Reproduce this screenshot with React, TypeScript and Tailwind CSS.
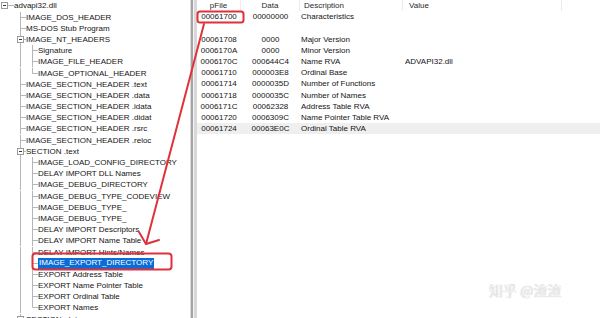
import React from "react";

type TreeNode = {
  depth: number;
  label: string;
  last?: boolean;
  toggle?: "-" | "+";
  selected?: boolean;
};

const treeNodes: TreeNode[] = [
  { depth: 0, label: "advapi32.dll", toggle: "-" },
  { depth: 1, label: "IMAGE_DOS_HEADER" },
  { depth: 1, label: "MS-DOS Stub Program" },
  { depth: 1, label: "IMAGE_NT_HEADERS", toggle: "-" },
  { depth: 2, label: "Signature" },
  { depth: 2, label: "IMAGE_FILE_HEADER" },
  { depth: 2, label: "IMAGE_OPTIONAL_HEADER", last: true },
  { depth: 1, label: "IMAGE_SECTION_HEADER .text" },
  { depth: 1, label: "IMAGE_SECTION_HEADER .data" },
  { depth: 1, label: "IMAGE_SECTION_HEADER .idata" },
  { depth: 1, label: "IMAGE_SECTION_HEADER .didat" },
  { depth: 1, label: "IMAGE_SECTION_HEADER .rsrc" },
  { depth: 1, label: "IMAGE_SECTION_HEADER .reloc" },
  { depth: 1, label: "SECTION .text", toggle: "-" },
  { depth: 2, label: "IMAGE_LOAD_CONFIG_DIRECTORY" },
  { depth: 2, label: "DELAY IMPORT DLL Names" },
  { depth: 2, label: "IMAGE_DEBUG_DIRECTORY" },
  { depth: 2, label: "IMAGE_DEBUG_TYPE_CODEVIEW" },
  { depth: 2, label: "IMAGE_DEBUG_TYPE_" },
  { depth: 2, label: "IMAGE_DEBUG_TYPE_" },
  { depth: 2, label: "DELAY IMPORT Descriptors" },
  { depth: 2, label: "DELAY IMPORT Name Table" },
  { depth: 2, label: "DELAY IMPORT Hints/Names" },
  { depth: 2, label: "IMAGE_EXPORT_DIRECTORY", selected: true },
  { depth: 2, label: "EXPORT Address Table" },
  { depth: 2, label: "EXPORT Name Pointer Table" },
  { depth: 2, label: "EXPORT Ordinal Table" },
  { depth: 2, label: "EXPORT Names", last: true },
  { depth: 1, label: "SECTION .data", toggle: "+" },
];

const rows = [
  { pFile: "00061700", data: "00000000", desc: "Characteristics", value: "" },
  { pFile: "", data: "", desc: "", value: "" },
  { pFile: "00061708", data: "0000", desc: "Major Version", value: "" },
  { pFile: "0006170A", data: "0000", desc: "Minor Version", value: "" },
  { pFile: "0006170C", data: "000644C4", desc: "Name RVA", value: "ADVAPI32.dll" },
  { pFile: "00061710", data: "000003E8", desc: "Ordinal Base", value: "" },
  { pFile: "00061714", data: "0000035D", desc: "Number of Functions", value: "" },
  { pFile: "00061718", data: "0000035C", desc: "Number of Names", value: "" },
  { pFile: "0006171C", data: "00062328", desc: "Address Table RVA", value: "" },
  { pFile: "00061720", data: "0006309C", desc: "Name Pointer Table RVA", value: "" },
  { pFile: "00061724", data: "00063E0C", desc: "Ordinal Table RVA", value: "", hot: true },
];

const LINE = "#b6b6b6";

function ToggleBox({ cx, sign }: { cx: number; sign: "-" | "+" }) {
  return (
    <g>
      <rect x={cx - 3} y={2.5} width={6} height={6} fill="#fff" stroke="#9a9a9a" />
      <line x1={cx - 1.5} y1={5.5} x2={cx + 1.5} y2={5.5} stroke="#333" />
      {sign === "+" && <line x1={cx} y1={4} x2={cx} y2={7} stroke="#333" />}
    </g>
  );
}

function RootCell({ toggle }: { toggle?: "-" | "+" }) {
  return (
    <svg width="14" height="11.2" viewBox="0 0 14 11.2" className="shrink-0">
      {toggle && (
        <>
          <line x1="8" y1="5.5" x2="14" y2="5.5" stroke={LINE} />
          <ToggleBox cx={4.5} sign={toggle} />
        </>
      )}
    </svg>
  );
}

function PipeCell() {
  return (
    <svg width="12" height="11.2" viewBox="0 0 12 11.2" className="shrink-0">
      <line x1="6.5" y1="0" x2="6.5" y2="11.2" stroke={LINE} />
    </svg>
  );
}

function ElbowCell({ last, toggle }: { last?: boolean; toggle?: "-" | "+" }) {
  return (
    <svg width="12" height="11.2" viewBox="0 0 12 11.2" className="shrink-0">
      <line x1="6.5" y1="0" x2="6.5" y2={last ? 5.5 : 11.2} stroke={LINE} />
      <line x1="6.5" y1="5.5" x2="12" y2="5.5" stroke={LINE} />
      {toggle && <ToggleBox cx={6.5} sign={toggle} />}
    </svg>
  );
}

function TreeRow({ node }: { node: TreeNode }) {
  const cells: React.ReactNode[] = [];
  if (node.depth === 0) {
    cells.push(<RootCell key="r" toggle={node.toggle} />);
  } else {
    cells.push(<RootCell key="r" />);
    for (let i = 1; i < node.depth; i++) cells.push(<PipeCell key={i} />);
    cells.push(<ElbowCell key="e" last={node.last} toggle={node.toggle} />);
  }
  return (
    <div className="flex h-[11.2px] items-center whitespace-nowrap">
      {cells}
      <span
        className={
          node.selected
            ? "bg-[#0a6cd6] text-white px-[1px] leading-[10.5px]"
            : "leading-[11.2px]"
        }
      >
        {node.label}
      </span>
    </div>
  );
}

export default function App() {
  return (
    <div
      className="relative w-[600px] h-[318px] overflow-hidden bg-white text-[8px] text-[#141414]"
      style={{ fontFamily: '"Liberation Sans", Arial, sans-serif' }}
    >
      <div className="flex h-full">
        {/* tree pane */}
        <div className="w-[190px] shrink-0 flex flex-col pt-[0.4px]">
          {treeNodes.map((n, i) => (
            <TreeRow key={i} node={n} />
          ))}
        </div>

        {/* splitter */}
        <div className="flex shrink-0 h-full">
          <div className="w-px bg-[#dcdcdc]" />
          <div className="w-[2px] bg-[#a4a4a4]" />
          <div className="w-px bg-[#f6f6f6]" />
          <div className="w-[3px] bg-[#d8d8d8]" />
        </div>

        {/* list pane */}
        <div className="flex-1 flex flex-col">
          <div className="flex h-[11.2px] leading-[11.2px] text-[#2a2a2a]">
            <div className="w-[44px] text-center border-r border-[#ececec]">pFile</div>
            <div className="w-[59px] text-center border-r border-[#ececec]">Data</div>
            <div className="w-[103px] pl-[4px] border-r border-[#ececec]">Description</div>
            <div className="w-[159px] pl-[6px] border-r border-[#ececec]">Value</div>
            <div className="flex-1" />
          </div>
          {rows.map((r, i) => (
            <div
              key={i}
              className={`flex h-[11.2px] leading-[11.2px] whitespace-nowrap ${r.hot ? "bg-[#efefef]" : ""}`}
            >
              <div className="w-[44px] text-center">{r.pFile}</div>
              <div className="w-[59px] text-center">{r.data}</div>
              <div className="w-[103px] pl-px">{r.desc}</div>
              <div className="w-[159px] pl-[2px]">{r.value}</div>
              <div className="flex-1" />
            </div>
          ))}
        </div>
      </div>

      {/* red annotations */}
      <svg
        className="absolute inset-0 pointer-events-none"
        width="600"
        height="318"
        viewBox="0 0 600 318"
      >
        <rect x="197.5" y="11.5" width="46" height="11" rx="2.5" fill="none" stroke="#e0313b" strokeWidth="2" />
        <rect x="32.5" y="253.5" width="139" height="16" rx="3" fill="none" stroke="#e0313b" strokeWidth="2" />
        <line x1="204" y1="24" x2="146" y2="244" stroke="#e0313b" strokeWidth="2" strokeLinecap="round" />
        <polyline
          points="139,232 146,244 159,240"
          fill="none"
          stroke="#e0313b"
          strokeWidth="2"
          strokeLinecap="round"
          strokeLinejoin="round"
        />
      </svg>

      {/* watermark */}
      <div
        className="absolute left-[489px] top-[282px] text-[14px] leading-[16px] text-[#f4f4f4] [text-shadow:0_0_1px_#a8a8a8] whitespace-nowrap"
        style={{ fontFamily: '"Noto Sans CJK SC", sans-serif' }}
      >
        知乎 @渣渣
      </div>
    </div>
  );
}
